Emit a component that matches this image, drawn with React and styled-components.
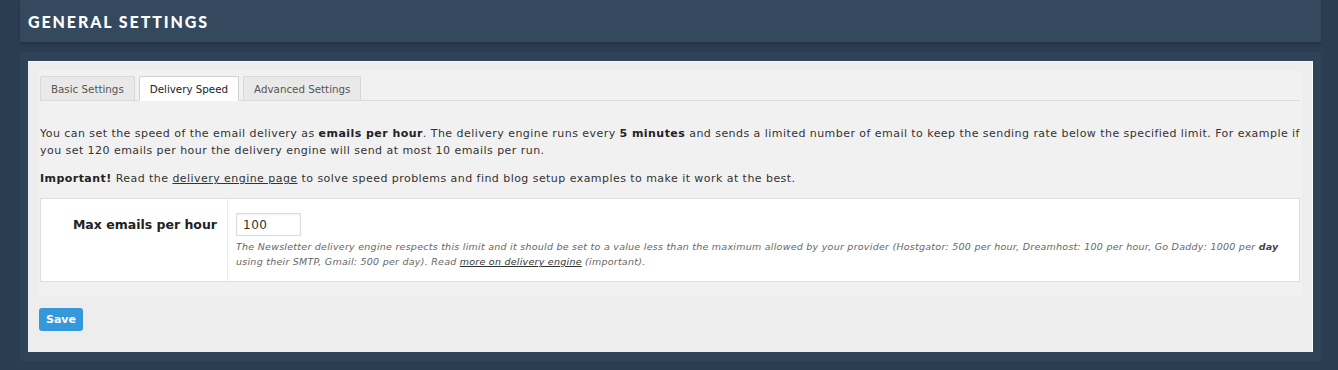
import styled, { createGlobalStyle } from "styled-components";

const GlobalStyle = createGlobalStyle`
    body {
        margin: 0;
        background-color: #2b3d51;
        font-family: "DejaVu Sans", Verdana, sans-serif;
    }
`;

const Page = styled.div`
    padding: 0 17px 8px 20px;
`;

const Header = styled.div`
    height: 42px;
    display: flex;
    align-items: center;
    padding-left: 8px;
    background-color: #35495e;
    box-shadow: 0 2px 3px rgba(0, 0, 0, 0.15);
`;

const Title = styled.h2`
    margin: 0;
    padding-top: 1px;
    font-family: "Lato", "Open Sans", sans-serif;
    font-weight: 900;
    font-size: 16px;
    letter-spacing: 1.9px;
    color: #ffffff;
    text-transform: uppercase;
`;

const Panel = styled.div`
    margin-top: 10px;
    padding: 9px 8px;
    background-color: #2f4358;
`;

const Content = styled.div`
    background-color: #ededed;
    border-top: 1px solid #ffffff;
    border-right: 1px solid #ffffff;
    padding: 9px 10px 21px 10px;
`;

const TabPanel = styled.div`
    background-color: #f1f1f1;
    padding: 5px 2px 14px 2px;
`;

const TabBar = styled.ul`
    display: flex;
    gap: 4px;
    margin: 0;
    padding: 0;
    list-style: none;
    border-bottom: 1px solid #dcdcdc;
`;

const Tab = styled.li`
    height: 23px;
    display: flex;
    align-items: center;
    padding: 0 10px;
    margin-bottom: -1px;
    border: 1px solid ${props => (props.active ? "#d0d0d0" : "#d8d8d8")};
    border-bottom-color: ${props => (props.active ? "#ffffff" : "#dcdcdc")};
    background-color: ${props => (props.active ? "#ffffff" : "#e9e9e9")};
    color: ${props => (props.active ? "#222" : "#555")};
    font-size: 10.3px;
    border-radius: 2px 2px 0 0;
`;

const Body = styled.div`
    padding-top: 24px;
`;

const Text = styled.p`
    margin: 0 0 11px 0;
    font-size: 11px;
    letter-spacing: 0.45px;
    line-height: 17px;
    color: #333;
    b {
        color: #222;
    }
`;

const Link = styled.a`
    color: #333;
    text-decoration: underline;
`;

const Table = styled.div`
    display: flex;
    margin-top: 11px;
    background-color: #ffffff;
    border: 1px solid #dedede;
`;

const Label = styled.div`
    width: 176px;
    flex-shrink: 0;
    padding: 18px 10px 0 0;
    text-align: right;
    font-weight: bold;
    font-size: 12.5px;
    color: #222;
    border-right: 1px solid #ececec;
`;

const Field = styled.div`
    flex: 1;
    padding: 14px 10px 12px 8px;
`;

const Input = styled.input`
    box-sizing: border-box;
    width: 65px;
    height: 23px;
    padding: 0 6px;
    border: 1px solid #dcdcdc;
    box-shadow: inset 0 1px 2px rgba(0, 0, 0, 0.07);
    font-family: inherit;
    font-size: 12px;
    letter-spacing: 0.5px;
    color: #333;
    outline: none;
`;

const Desc = styled.p`
    margin: 3px 0 0 0;
    font-size: 9.5px;
    font-style: italic;
    letter-spacing: 0.25px;
    line-height: 15px;
    color: #666;
    a {
        color: #333;
    }
    b {
        color: #444;
    }
`;

const SaveButton = styled.button`
    margin: 12px 0 0 1px;
    height: 23px;
    padding: 0 7px;
    border: none;
    border-radius: 3px;
    background-color: #3498db;
    color: #ffffff;
    font-family: inherit;
    font-weight: bold;
    font-size: 11px;
    cursor: pointer;
`;

const tabs = ["Basic Settings", "Delivery Speed", "Advanced Settings"];

const App = () => {
    return (
        <>
            <GlobalStyle />
            <Page>
                <Header>
                    <Title>General Settings</Title>
                </Header>
                <Panel>
                    <Content>
                        <TabPanel>
                            <TabBar>
                                {tabs.map(t => (
                                    <Tab key={t} active={t === "Delivery Speed"}>
                                        {t}
                                    </Tab>
                                ))}
                            </TabBar>
                            <Body>
                                <Text>
                                    You can set the speed of the email delivery as <b>emails per hour</b>. The
                                    delivery engine runs every <b>5 minutes</b> and sends a limited number of
                                    email to keep the sending rate below the specified limit. For example if you
                                    set 120 emails per hour the delivery engine will send at most 10 emails per
                                    run.
                                </Text>
                                <Text>
                                    <b>Important!</b> Read the <Link href="#">delivery engine page</Link> to
                                    solve speed problems and find blog setup examples to make it work at the
                                    best.
                                </Text>
                                <Table>
                                    <Label>Max emails per hour</Label>
                                    <Field>
                                        <Input defaultValue="100" />
                                        <Desc>
                                            The Newsletter delivery engine respects this limit and it should be
                                            set to a value less than the maximum allowed by your provider
                                            (Hostgator: 500 per hour, Dreamhost: 100 per hour, Go Daddy: 1000
                                            per <b>day</b> using their SMTP, Gmail: 500 per day). Read{" "}
                                            <a href="#">more on delivery engine</a> (important).
                                        </Desc>
                                    </Field>
                                </Table>
                            </Body>
                        </TabPanel>
                        <SaveButton>Save</SaveButton>
                    </Content>
                </Panel>
            </Page>
        </>
    );
};

export default App;
